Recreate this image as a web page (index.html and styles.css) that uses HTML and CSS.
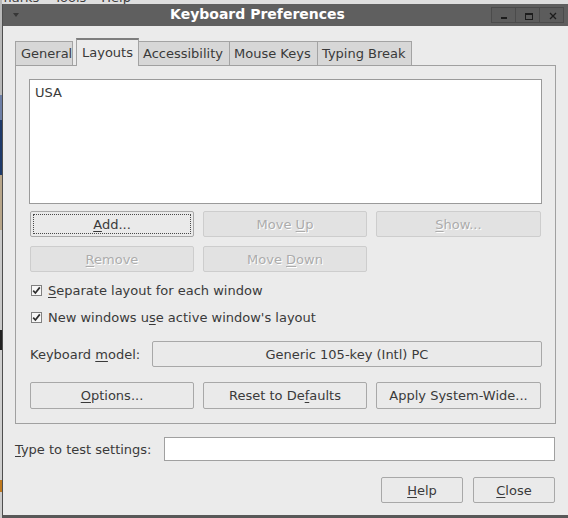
FILE: index.html
```html
<!DOCTYPE html>
<html>
<head>
<meta charset="utf-8">
<title>Keyboard Preferences</title>
<link rel="stylesheet" href="styles.css">
</head>
<body>
<div class="desktop">
  <div class="backdrop">
    <div class="bg-menu"><span>marks</span><span>Tools</span><span>Help</span></div>
    <div class="bg-edge">
      <i class="e-gray"></i><i class="e-blue"></i><i class="e-navy"></i><i class="e-tan"></i><i class="e-light"></i><i class="e-dark"></i><i class="e-light2"></i><i class="e-orange"></i><i class="e-light3"></i>
    </div>
  </div>

  <div class="window">
    <div class="titlebar">
      <span class="menu-arrow"></span>
      <div class="title">Keyboard Preferences</div>
      <div class="wm-buttons">
        <span class="wm-btn"><svg width="24" height="15" viewBox="0 0 24 15"><rect x="9" y="9" width="6" height="2" fill="#1c1c1c"/></svg></span>
        <span class="wm-btn"><svg width="24" height="15" viewBox="0 0 24 15"><rect x="9.5" y="5.5" width="7" height="6" fill="none" stroke="#1c1c1c" stroke-width="1"/><rect x="9" y="5" width="8" height="2" fill="#1c1c1c"/></svg></span>
        <span class="wm-btn"><svg width="24" height="15" viewBox="0 0 24 15"><path d="M10 5 L16 11 M16 5 L10 11" stroke="#1c1c1c" stroke-width="1.3" fill="none"/></svg></span>
      </div>
    </div>

    <div class="client">
      <div class="notebook">
        <div class="tabs">
          <div class="tab t-general">General</div>
          <div class="tab active t-layouts">Layouts</div>
          <div class="tab t-access">Accessibility</div>
          <div class="tab t-mouse">Mouse Keys</div>
          <div class="tab t-typing">Typing Break</div>
        </div>
        <div class="panel">
          <div class="layout-list">
            <div class="list-row">USA</div>
          </div>

          <div class="btn-grid two-rows">
            <button class="btn focused"><u>A</u>dd...</button>
            <button class="btn disabled">Move <u>U</u>p</button>
            <button class="btn disabled"><u>S</u>how...</button>
            <button class="btn disabled"><u>R</u>emove</button>
            <button class="btn disabled">Move <u>D</u>own</button>
          </div>

          <div class="checks">
            <label class="check-row"><span class="checkbox"><svg width="9" height="9" viewBox="0 0 9 9"><path d="M1.2 4.6 L3.4 7 L7.8 1.4" stroke="#2e2e2e" stroke-width="1.7" fill="none"/></svg></span><span><u>S</u>eparate layout for each window</span></label>
            <label class="check-row"><span class="checkbox"><svg width="9" height="9" viewBox="0 0 9 9"><path d="M1.2 4.6 L3.4 7 L7.8 1.4" stroke="#2e2e2e" stroke-width="1.7" fill="none"/></svg></span><span>New windows u<u>s</u>e active window's layout</span></label>
          </div>

          <div class="model-row">
            <span class="model-label">Keyboard <u>m</u>odel:</span>
            <button class="btn combo">Generic 105-key (Intl) PC</button>
          </div>

          <div class="btn-grid bottom-row">
            <button class="btn"><u>O</u>ptions...</button>
            <button class="btn">Reset to De<u>f</u>aults</button>
            <button class="btn">Apply System-Wide...</button>
          </div>
        </div>
      </div>

      <div class="test-row">
        <span class="test-label"><u>T</u>ype to test settings:</span>
        <div class="entry"></div>
      </div>

      <div class="dialog-actions">
        <button class="btn action help"><u>H</u>elp</button>
        <button class="btn action close"><u>C</u>lose</button>
      </div>
    </div>
  </div>
</div>
</body>
</html>
```

FILE: styles.css
```css
* { box-sizing: border-box; }

html, body {
  margin: 0;
  padding: 0;
}

body {
  font-family: "DejaVu Sans", "Liberation Sans", sans-serif;
  font-size: 13px;
  color: #3a3a3a;
  background: #d9d9d9;
}

.desktop {
  position: relative;
  width: 568px;
  height: 518px;
  overflow: hidden;
  background: #dedede;
}

/* background application peeking out */
.backdrop {
  position: absolute;
  inset: 0;
}

.bg-menu {
  position: absolute;
  top: -10px;
  left: -1px;
  display: flex;
  gap: 15px;
  font-size: 13px;
  color: #3c3c3c;
  white-space: nowrap;
}

.bg-edge {
  position: absolute;
  left: 0;
  top: 0;
  width: 2px;
  height: 518px;
  display: flex;
  flex-direction: column;
}
.bg-edge i { display: block; width: 2px; }
.e-gray { height: 95px; background: #b9b9b9; }
.e-blue { height: 25px; background: #6d7fa6; }
.e-navy { height: 55px; background: #1e3a6a; }
.e-tan { height: 55px; background: #b8a68a; }
.e-light { height: 100px; background: #c9c9c9; }
.e-dark { height: 20px; background: #222; }
.e-light2 { height: 130px; background: #cfcfcf; }
.e-orange { height: 12px; background: #c07a20; }
.e-light3 { flex: 1; background: #cccccc; }

/* dialog window */
.window {
  position: absolute;
  left: 2px;
  top: 4px;
  width: 566px;
  height: 514px;
  display: flex;
  flex-direction: column;
  background: #ebebeb;
  border-left: 1px solid #4e4e4e;
  border-bottom: 3px solid #585858;
}

.titlebar {
  height: 22px;
  flex: none;
  display: flex;
  align-items: center;
  background: #5f5f5f;
  color: #ffffff;
}

.menu-arrow {
  width: 0;
  height: 0;
  margin-left: 10px;
  margin-bottom: 1px;
  border-left: 3.5px solid transparent;
  border-right: 3.5px solid transparent;
  border-top: 4px solid #373737;
}

.title {
  flex: 1;
  text-align: center;
  font-weight: bold;
  font-size: 14px;
  line-height: 18px;
  padding-left: 4px;
  padding-bottom: 2px;
}

.wm-buttons {
  display: flex;
  align-self: flex-start;
  margin-top: 3px;
  margin-right: 4px;
}

.wm-btn {
  display: block;
  width: 25px;
  height: 16px;
  background: #5c5c5c;
  border: 1px solid #4b4b4b;
  margin-left: -1px;
}
.wm-btn svg { display: block; }

.client {
  flex: 1;
  display: flex;
  flex-direction: column;
  padding: 12px 12px 0 12px;
}

/* notebook */
.tabs {
  display: flex;
  align-items: flex-end;
  height: 27px;
}

.tab {
  height: 24px;
  line-height: 23px;
  padding: 0 5px;
  background: #d7d7d7;
  border: 1px solid #a3a3a3;
  border-bottom: none;
  margin-left: -1px;
  white-space: nowrap;
  color: #3a3a3a;
}
.tab:first-child { margin-left: 0; }

.tab.active {
  position: relative;
  z-index: 1;
  height: 28px;
  line-height: 25px;
  margin-bottom: -1px;
  margin-left: 3px;
  background: #ebebeb;
  border-top: 2px solid #7e7e7e;
}

.t-general { width: 58px; }
.t-layouts { width: 63px; }
.t-access { width: 92px; margin-left: -1px; padding-left: 4px; }
.t-mouse { width: 89px; padding-left: 4px; }
.t-typing { width: 95px; padding-left: 4px; }

.panel {
  border: 1px solid #a0a0a0;
  padding: 13px 13px 14px 13px;
}

.layout-list {
  height: 125px;
  background: #ffffff;
  border: 1px solid #9a9a9a;
  padding: 4px 5px;
}
.list-row {
  line-height: 17px;
  color: #3a3a3a;
}

/* buttons */
.btn {
  font-family: inherit;
  font-size: 13px;
  color: #3a3a3a;
  background: #eaeaea;
  border: 1px solid #a8a8a8;
  border-radius: 2px;
  padding: 0;
  margin: 0;
  text-align: center;
  white-space: nowrap;
}
.btn u { text-decoration: underline; text-underline-offset: 2px; }

.btn.disabled {
  background: #e2e2e2;
  border-color: #cdcdcd;
  color: #acacac;
  text-shadow: 1px 1px 0 #ffffff;
}

.btn.focused {
  outline: 1px dotted #4a4a4a;
  outline-offset: -4px;
}

.btn-grid {
  display: grid;
  grid-template-columns: 164px 164px 165px;
  column-gap: 9px;
  padding: 0 1px;
}

.two-rows {
  margin-top: 7px;
  grid-auto-rows: 26px;
  row-gap: 9px;
}

.checks {
  margin-top: 5px;
  display: flex;
  flex-direction: column;
}

.check-row {
  height: 27px;
  display: flex;
  align-items: center;
  padding-left: 2px;
  gap: 6px;
}
.check-row u { text-underline-offset: 2px; }

.checkbox {
  width: 11px;
  height: 11px;
  border: 1px solid #808080;
  background: #f7f7f7;
  display: flex;
  align-items: center;
  justify-content: center;
}
.checkbox svg { display: block; }

.model-row {
  margin-top: 10px;
  display: flex;
  align-items: center;
  padding-left: 1px;
}
.model-label {
  width: 122px;
}
.model-label u { text-underline-offset: 2px; }
.combo {
  flex: 1;
  height: 26px;
  margin-right: 0;
}

.bottom-row {
  margin-top: 15px;
  grid-auto-rows: 27px;
}

/* below notebook */
.test-row {
  margin-top: 13px;
  display: flex;
  align-items: center;
}
.test-label {
  width: 149px;
}
.test-label u { text-underline-offset: 2px; }
.entry {
  width: 391px;
  height: 24px;
  background: #ffffff;
  border: 1px solid #a0a0a0;
}

.dialog-actions {
  margin-top: 16px;
  display: flex;
  justify-content: flex-end;
  gap: 10px;
  padding-right: 1px;
}
.action {
  height: 26px;
}
.help { width: 82px; }
.close { width: 82px; }
```
